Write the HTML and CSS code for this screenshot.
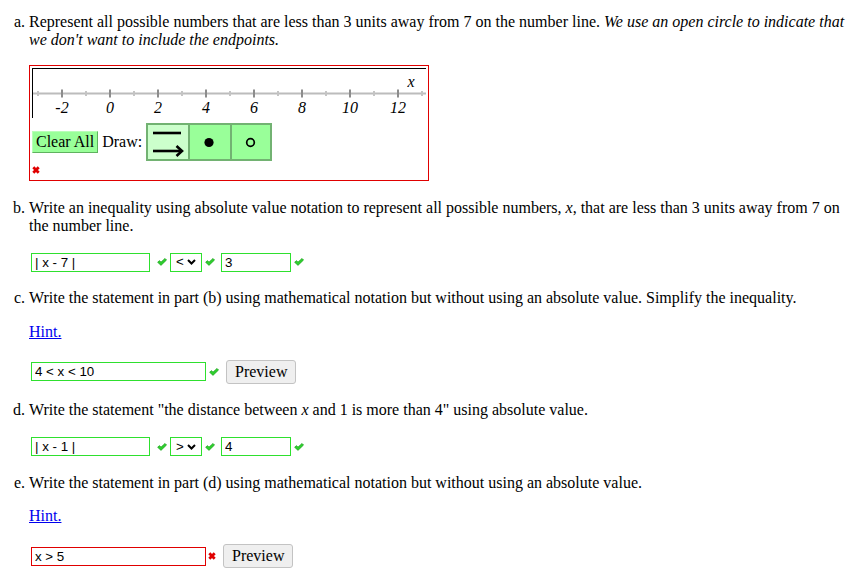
FILE: index.html
```html
<!DOCTYPE html>
<html lang="en">
<head>
  <meta charset="UTF-8">
  <title>Absolute value inequalities</title>
  <link rel="stylesheet" href="styles.css">
</head>
<body>
  <ol class="parts">
    <li class="part">
      <p class="prompt">Represent all possible numbers that are less than 3 units away from 7 on the number line. <em>We use an open circle to indicate that we don't want to include the endpoints.</em></p>
      <div class="graph-box">
        <div class="graph-canvas">
          <svg width="393" height="49" viewBox="0 0 393 49">
            <line x1="0" y1="24.5" x2="393" y2="24.5" stroke="#bcbcbc" stroke-width="2"/>
            <g stroke="#c4c4c4" stroke-width="2">
              <line x1="5" y1="22" x2="5" y2="27"/>
              <line x1="53" y1="22" x2="53" y2="27"/>
              <line x1="101" y1="22" x2="101" y2="27"/>
              <line x1="149" y1="22" x2="149" y2="27"/>
              <line x1="197" y1="22" x2="197" y2="27"/>
              <line x1="245" y1="22" x2="245" y2="27"/>
              <line x1="293" y1="22" x2="293" y2="27"/>
              <line x1="341" y1="22" x2="341" y2="27"/>
              <line x1="389" y1="22" x2="389" y2="27"/>
            </g>
            <g stroke="#8c8c8c" stroke-width="2">
              <line x1="29" y1="20.5" x2="29" y2="28.5"/>
              <line x1="77" y1="20.5" x2="77" y2="28.5"/>
              <line x1="125" y1="20.5" x2="125" y2="28.5"/>
              <line x1="173" y1="20.5" x2="173" y2="28.5"/>
              <line x1="221" y1="20.5" x2="221" y2="28.5"/>
              <line x1="269" y1="20.5" x2="269" y2="28.5"/>
              <line x1="317" y1="20.5" x2="317" y2="28.5"/>
              <line x1="365" y1="20.5" x2="365" y2="28.5"/>
            </g>
            <g class="axis-labels" text-anchor="middle">
              <text x="29" y="44">-2</text>
              <text x="77" y="44">0</text>
              <text x="125" y="44">2</text>
              <text x="173" y="44">4</text>
              <text x="221" y="44">6</text>
              <text x="269" y="44">8</text>
              <text x="317" y="44">10</text>
              <text x="365" y="44">12</text>
              <text x="378" y="18">x</text>
            </g>
          </svg>
        </div>
        <div class="graph-tools">
          <button class="clear-btn">Clear All</button>
          <span class="draw-label">Draw:</span>
          <div class="tool-group">
            <button class="tool tool-ray selected">
              <svg width="40" height="34" viewBox="0 0 40 34">
                <line x1="5" y1="8" x2="33" y2="8" stroke="#000" stroke-width="2.6"/>
                <line x1="5" y1="26" x2="33" y2="26" stroke="#000" stroke-width="2.6"/>
                <polyline points="28.5,21 34,26 28.5,31" fill="none" stroke="#000" stroke-width="2.6"/>
              </svg>
            </button>
            <button class="tool tool-dot">
              <svg width="40" height="34" viewBox="0 0 40 34"><circle cx="19" cy="17.5" r="4.6" fill="#000"/></svg>
            </button>
            <button class="tool tool-open">
              <svg width="38" height="34" viewBox="0 0 38 34"><circle cx="18.5" cy="17.5" r="3.8" fill="none" stroke="#000" stroke-width="1.7"/></svg>
            </button>
          </div>
        </div>
        <div class="graph-feedback">
          <svg class="wrong" width="8" height="8" viewBox="0 0 8 8"><path d="M1.3 1.3 L6.7 6.7 M6.7 1.3 L1.3 6.7" stroke="#e00000" stroke-width="2.8"/></svg>
        </div>
      </div>
    </li>

    <li class="part">
      <p class="prompt">Write an inequality using absolute value notation to represent all possible numbers, <i class="math">x</i>, that are less than 3 units away from 7 on the number line.</p>
      <div class="answer-row">
        <input class="ans expr" type="text" value="| x - 7 |">
        <svg class="check" width="10" height="8" viewBox="0 0 10 8"><path d="M0.6 4.3 L2.5 2.6 L4 4.1 L8 0.4 L9.6 2 L4 7.4 Z" fill="#2fcf2f" stroke="#139913" stroke-width="0.6"/></svg>
        <div class="ans pick"><span>&lt;</span><svg width="9" height="6" viewBox="0 0 9 6"><path d="M1 1 L4.5 4.5 L8 1" fill="none" stroke="#000" stroke-width="2"/></svg></div>
        <svg class="check" width="10" height="8" viewBox="0 0 10 8"><path d="M0.6 4.3 L2.5 2.6 L4 4.1 L8 0.4 L9.6 2 L4 7.4 Z" fill="#2fcf2f" stroke="#139913" stroke-width="0.6"/></svg>
        <input class="ans num" type="text" value="3">
        <svg class="check" width="10" height="8" viewBox="0 0 10 8"><path d="M0.6 4.3 L2.5 2.6 L4 4.1 L8 0.4 L9.6 2 L4 7.4 Z" fill="#2fcf2f" stroke="#139913" stroke-width="0.6"/></svg>
      </div>
    </li>

    <li class="part">
      <p class="prompt">Write the statement in part (b) using mathematical notation but without using an absolute value. Simplify the inequality.</p>
      <p class="hint"><a href="#">Hint.</a></p>
      <div class="answer-row">
        <input class="ans long" type="text" value="4 < x < 10">
        <svg class="check" width="10" height="8" viewBox="0 0 10 8"><path d="M0.6 4.3 L2.5 2.6 L4 4.1 L8 0.4 L9.6 2 L4 7.4 Z" fill="#2fcf2f" stroke="#139913" stroke-width="0.6"/></svg>
        <button class="preview">Preview</button>
      </div>
    </li>

    <li class="part">
      <p class="prompt">Write the statement "the distance between <i class="math">x</i> and 1 is more than 4" using absolute value.</p>
      <div class="answer-row">
        <input class="ans expr" type="text" value="| x - 1 |">
        <svg class="check" width="10" height="8" viewBox="0 0 10 8"><path d="M0.6 4.3 L2.5 2.6 L4 4.1 L8 0.4 L9.6 2 L4 7.4 Z" fill="#2fcf2f" stroke="#139913" stroke-width="0.6"/></svg>
        <div class="ans pick"><span>&gt;</span><svg width="9" height="6" viewBox="0 0 9 6"><path d="M1 1 L4.5 4.5 L8 1" fill="none" stroke="#000" stroke-width="2"/></svg></div>
        <svg class="check" width="10" height="8" viewBox="0 0 10 8"><path d="M0.6 4.3 L2.5 2.6 L4 4.1 L8 0.4 L9.6 2 L4 7.4 Z" fill="#2fcf2f" stroke="#139913" stroke-width="0.6"/></svg>
        <input class="ans num" type="text" value="4">
        <svg class="check" width="10" height="8" viewBox="0 0 10 8"><path d="M0.6 4.3 L2.5 2.6 L4 4.1 L8 0.4 L9.6 2 L4 7.4 Z" fill="#2fcf2f" stroke="#139913" stroke-width="0.6"/></svg>
      </div>
    </li>

    <li class="part">
      <p class="prompt">Write the statement in part (d) using mathematical notation but without using an absolute value.</p>
      <p class="hint"><a href="#">Hint.</a></p>
      <div class="answer-row">
        <input class="ans long bad" type="text" value="x > 5">
        <svg class="wrong" width="8" height="8" viewBox="0 0 8 8"><path d="M1.3 1.3 L6.7 6.7 M6.7 1.3 L1.3 6.7" stroke="#e00000" stroke-width="2.8"/></svg>
        <button class="preview">Preview</button>
      </div>
    </li>
  </ol>
</body>
</html>
```

FILE: styles.css
```css
*{ box-sizing: border-box; }
body{ margin: 8px; font-family: "Liberation Serif", "Times New Roman", serif; font-size: 16px; line-height: 18px; color: #000; background: #fff; }
p{ margin: 0; }

.parts{ margin: 0; padding: 4.6px 0 0 21px; list-style-type: lower-alpha; }
.part + .part{ margin-top: 17.1px; }
.prompt em{ font-style: italic; }
.math{ font-style: italic; }

/* part a : number line */
.graph-box{ margin-top: 16.4px; width: 400px; border: 1px solid #e00000; padding: 2px 2px 7px; }
.graph-canvas{ width: 394px; height: 50px; border-top: 1px solid #000; border-left: 1px solid #000; }
.graph-canvas svg{ display: block; }
.axis-labels{ font-family: "Liberation Serif", serif; font-style: italic; font-size: 16px; fill: #000; }

.graph-tools{ display: flex; align-items: center; margin-top: 5px; }
.clear-btn{ height: 22px; padding: 0 3px; margin: 0; font: inherit; color: #000; background: #99ff99;
      border: 1px solid; border-color: #b8ffb8 #5fb25f #5fb25f #b8ffb8; border-radius: 0; }
.draw-label{ margin-left: 4px; }
.tool-group{ display: flex; margin-left: 4px; border: 2px solid #72b272; height: 38px; }
.tool{ display: block; margin: 0; padding: 0; height: 34px; border: 0; background: #99ff99; }
.tool svg{ display: block; }
.tool-ray{ width: 40px; }
.tool-dot{ width: 42px; border-left: 2px solid #72b272; }
.tool-open{ width: 40px; border-left: 2px solid #72b272; }
.tool.selected{ background: #ccffcc; }

.graph-feedback{ display: flex; height: 7px; margin-top: 5.5px; }
.wrong, .check{ display: block; flex: none; }

/* answer rows */
.answer-row{ display: flex; align-items: center; margin: 18.8px 0 3px; padding-left: 2px; }
.part:nth-child(2) .answer-row{ margin-top: 18.4px; }
.hint{ margin-top: 15.7px; }
.hint a{ color: #0000ee; }

.ans{ height: 19px; margin: 0; padding: 0 3px; border: 1px solid #2ee02e; border-radius: 0; background: #fff;
      font-family: "Liberation Sans", Arial, sans-serif; font-size: 13.33px; color: #000; outline: none; }
.expr{ width: 119px; margin-right: 4px; }
.long{ width: 175px; }
.num{ width: 70px; margin-left: 6px; }
.bad{ border-color: #e00000; }
.check{ margin-left: 3px; }
.answer-row .wrong{ margin-left: 2px; }
.pick{ width: 32px; margin-left: 3px; display: flex; align-items: center; justify-content: space-between; padding: 0 5px 0 5px; }
.pick svg{ display: block; }

.preview{ height: 24px; margin: 0 0 0 7px; padding: 0 8px; font: inherit; color: #000; background: #efefef;
      border: 1px solid #c3c3c3; border-radius: 3px; }
```
